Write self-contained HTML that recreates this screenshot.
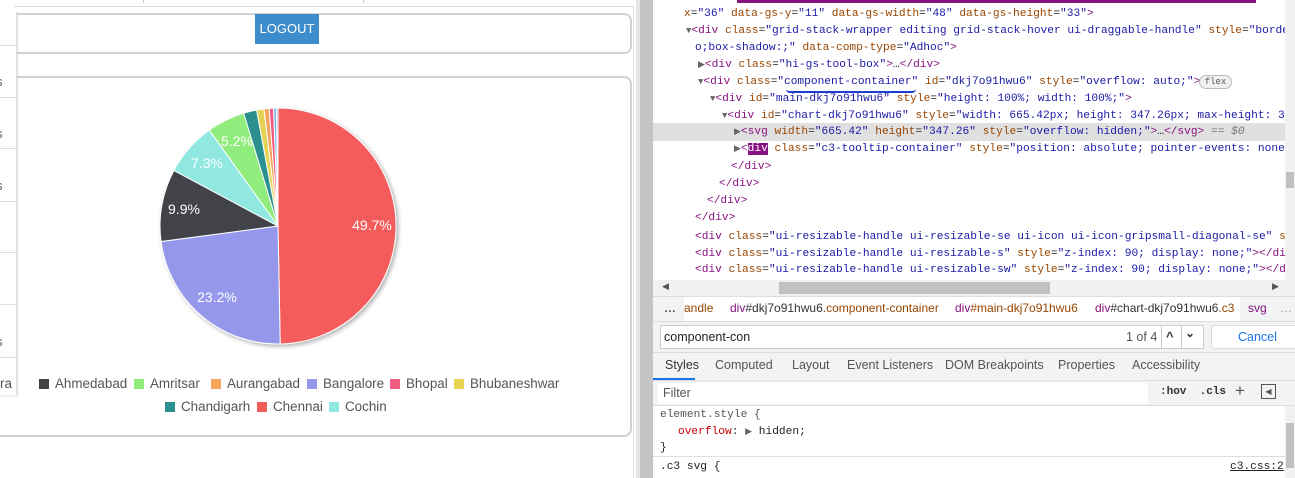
<!DOCTYPE html>
<html><head><meta charset="utf-8"><style>
*{margin:0;padding:0;box-sizing:border-box}
body{width:1295px;height:478px;overflow:hidden;background:#fff;font-family:"Liberation Sans",sans-serif;position:relative}
.abs{position:absolute}
.mono{font-family:"Liberation Mono",monospace;font-size:11.2px;white-space:pre;color:#222;line-height:17px}
.t{color:#881280}.a{color:#994500}.v{color:#1a1aa6}.p{color:#881280}
.ar{color:#666;font-size:9px}
.leg{position:absolute;font-size:13.4px;color:#555;white-space:nowrap}
.sq{position:absolute;width:10px;height:10px}
.bc{position:absolute;top:301px;font-size:12px;white-space:nowrap}
.tab{position:absolute;top:358px;font-size:12.5px;color:#555;white-space:nowrap}
</style></head><body>
<div class="abs" style="left:143px;top:0;width:1px;height:3px;background:#ccc"></div>
<div class="abs" style="left:363px;top:0;width:1px;height:3px;background:#ccc"></div>
<div class="abs" style="left:14px;top:6px;width:620px;height:472px;border-top:1px solid #ddd;border-right:1px solid #ddd"></div>
<div class="abs" style="left:-12px;top:13px;width:644px;height:41px;border:2px solid #d2d2d2;border-radius:8px"></div>
<div class="abs" style="left:255px;top:14px;width:64px;height:30px;background:#3d8ccb;color:#fff;font-size:13px;line-height:30px;text-align:center">LOGOUT</div>
<div class="abs" style="left:-12px;top:76px;width:644px;height:361px;border:2px solid #d2d2d2;border-radius:8px"></div>
<div class="abs" style="left:0;top:12px;width:17px;height:383px;background:#fff;border-right:1px solid #ddd;box-shadow:1px 1px 2px rgba(0,0,0,.12)"></div>
<div class="abs" style="left:0;top:45px;width:16px;height:1px;background:#ddd"></div>
<div class="abs" style="left:0;top:97px;width:16px;height:1px;background:#ddd"></div>
<div class="abs" style="left:0;top:148px;width:16px;height:1px;background:#ddd"></div>
<div class="abs" style="left:0;top:201px;width:16px;height:1px;background:#ddd"></div>
<div class="abs" style="left:0;top:252px;width:16px;height:1px;background:#ddd"></div>
<div class="abs" style="left:0;top:304px;width:16px;height:1px;background:#ddd"></div>
<div class="abs" style="left:0;top:357px;width:16px;height:1px;background:#ddd"></div>
<div class="abs" style="left:-4px;top:74px;font-size:13px;color:#555">s</div>
<div class="abs" style="left:-4px;top:126px;font-size:13px;color:#555">s</div>
<div class="abs" style="left:-4px;top:178px;font-size:13px;color:#555">s</div>
<div class="abs" style="left:-4px;top:334px;font-size:13px;color:#555">s</div>
<svg class="abs" style="left:0;top:0" width="636" height="478">
<defs><filter id="sh" x="-10%" y="-10%" width="130%" height="130%"><feDropShadow dx="2" dy="2" stdDeviation="2" flood-color="#000" flood-opacity="0.3"/></filter></defs>
<g id="sl" filter="url(#sh)"></g>
<g fill="#fff" font-size="14" font-family="Liberation Sans,sans-serif" text-anchor="middle">
<text x="372" y="230">49.7%</text><text x="217" y="302">23.2%</text><text x="184" y="214">9.9%</text><text x="207" y="168">7.3%</text><text x="237" y="146">5.2%</text></g>
</svg>
<script>
(function(){var d=[[49.7,'#f45b5b'],[23.2,'#9497ea'],[9.9,'#434348'],[7.3,'#91e8e1'],[5.2,'#90ed7d'],[1.8,'#2b908f'],[1.0,'#e4d354'],[0.7,'#f7a35c'],[0.6,'#f15c80'],[0.4,'#7cb5ec'],[0.2,'#8085e9']];
var cx=278,cy=226,r=118,a=0,s='',tot=0;d.forEach(function(x){tot+=x[0]});
d.forEach(function(x){var b=a+x[0]/tot*2*Math.PI;var x1=cx+r*Math.sin(a),y1=cy-r*Math.cos(a),x2=cx+r*Math.sin(b),y2=cy-r*Math.cos(b);
s+='<path d="M'+cx+','+cy+'L'+x1+','+y1+'A'+r+','+r+' 0 '+(b-a>Math.PI?1:0)+' 1 '+x2+','+y2+'Z" fill="'+x[1]+'" stroke="#fff" stroke-width="1"/>';a=b;});
document.getElementById('sl').innerHTML=s;})();
</script>
<div class="leg" style="left:0;top:376px">ra</div>
<div class="sq" style="left:39px;top:379px;background:#434348"></div><div class="leg" style="left:55px;top:376px">Ahmedabad</div>
<div class="sq" style="left:134px;top:379px;background:#90ed7d"></div><div class="leg" style="left:150px;top:376px">Amritsar</div>
<div class="sq" style="left:211px;top:379px;background:#f7a35c"></div><div class="leg" style="left:227px;top:376px">Aurangabad</div>
<div class="sq" style="left:307px;top:379px;background:#9497ea"></div><div class="leg" style="left:323px;top:376px">Bangalore</div>
<div class="sq" style="left:390px;top:379px;background:#f15c80"></div><div class="leg" style="left:406px;top:376px">Bhopal</div>
<div class="sq" style="left:454px;top:379px;background:#e4d354"></div><div class="leg" style="left:470px;top:376px">Bhubaneshwar</div>
<div class="sq" style="left:165px;top:402px;background:#2b908f"></div><div class="leg" style="left:181px;top:399px">Chandigarh</div>
<div class="sq" style="left:257px;top:402px;background:#f45b5b"></div><div class="leg" style="left:273px;top:399px">Chennai</div>
<div class="sq" style="left:329px;top:402px;background:#91e8e1"></div><div class="leg" style="left:345px;top:399px">Cochin</div>
<div class="abs" style="left:636px;top:0;width:4px;height:478px;background:#e6e6e6"></div>
<div class="abs" style="left:640px;top:0;width:13px;height:478px;background:#c4c4c4"></div>
<div class="abs" style="left:653px;top:0;width:642px;height:478px;background:#fff;overflow:hidden">
<div class="abs" style="left:84px;top:0;width:519px;height:3px;background:#881280"></div>
<div class="abs" style="left:0;top:123px;width:632px;height:18px;background:#e0e0e0"></div>
<div class="mono abs" style="left:31px;top:6px"><span class="a">x</span>=<span class="v">"36"</span> <span class="a">data-gs-y</span>=<span class="v">"11"</span> <span class="a">data-gs-width</span>=<span class="v">"48"</span> <span class="a">data-gs-height</span>=<span class="v">"33"</span><span class="p">&gt;</span></div>
<div class="mono abs" style="left:33px;top:23px"><span class="ar">▼</span><span class="t">&lt;div</span> <span class="a">class</span>=<span class="v">"grid-stack-wrapper editing grid-stack-hover ui-draggable-handle"</span> <span class="a">style</span>=<span class="v">"border</span></div>
<div class="mono abs" style="left:42px;top:40px"><span class="v">o;box-shadow:;"</span> <span class="a">data-comp-type</span>=<span class="v">"Adhoc"</span><span class="t">&gt;</span></div>
<div class="mono abs" style="left:45px;top:57px"><span class="ar">▶</span><span class="t">&lt;div</span> <span class="a">class</span>=<span class="v">"hi-gs-tool-box"</span><span class="t">&gt;</span>…<span class="t">&lt;/div&gt;</span></div>
<div class="mono abs" style="left:45px;top:74px"><span class="ar">▼</span><span class="t">&lt;div</span> <span class="a">class</span>=<span class="v">"component-container"</span> <span class="a">id</span>=<span class="v">"dkj7o91hwu6"</span> <span class="a">style</span>=<span class="v">"overflow: auto;"</span><span class="t">&gt;</span></div>
<div class="abs" style="left:133px;top:89px;width:130px;height:4px;border-bottom:2px solid #1b3fd0;border-radius:0 0 60px 60px"></div>
<div class="abs" style="left:546px;top:75px;width:33px;height:14px;border:1px solid #bbb;border-radius:7px;background:#f1f1f1;font-family:'Liberation Mono',monospace;font-size:9px;color:#555;text-align:center;line-height:12px">flex</div>
<div class="mono abs" style="left:57px;top:91px"><span class="ar">▼</span><span class="t">&lt;div</span> <span class="a">id</span>=<span class="v">"main-dkj7o91hwu6"</span> <span class="a">style</span>=<span class="v">"height: 100%; width: 100%;"</span><span class="t">&gt;</span></div>
<div class="mono abs" style="left:69px;top:108px"><span class="ar">▼</span><span class="t">&lt;div</span> <span class="a">id</span>=<span class="v">"chart-dkj7o91hwu6"</span> <span class="a">style</span>=<span class="v">"width: 665.42px; height: 347.26px; max-height: 34</span></div>
<div class="mono abs" style="left:81px;top:124px"><span class="ar">▶</span><span class="t">&lt;svg</span> <span class="a">width</span>=<span class="v">"665.42"</span> <span class="a">height</span>=<span class="v">"347.26"</span> <span class="a">style</span>=<span class="v">"overflow: hidden;"</span><span class="t">&gt;</span>…<span class="t">&lt;/svg&gt;</span> <span style="color:#777">== <i>$0</i></span></div>
<div class="mono abs" style="left:81px;top:141px"><span class="ar">▶</span><span class="t">&lt;</span><span style="background:#881280;color:#fff">div</span> <span class="a">class</span>=<span class="v">"c3-tooltip-container"</span> <span class="a">style</span>=<span class="v">"position: absolute; pointer-events: none;</span></div>
<div class="mono abs" style="left:78px;top:159px"><span class="t">&lt;/div&gt;</span></div>
<div class="mono abs" style="left:66px;top:176px"><span class="t">&lt;/div&gt;</span></div>
<div class="mono abs" style="left:54px;top:193px"><span class="t">&lt;/div&gt;</span></div>
<div class="mono abs" style="left:42px;top:210px"><span class="t">&lt;/div&gt;</span></div>
<div class="mono abs" style="left:42px;top:229px"><span class="t">&lt;div</span> <span class="a">class</span>=<span class="v">"ui-resizable-handle ui-resizable-se ui-icon ui-icon-gripsmall-diagonal-se"</span> <span class="a">sty</span></div>
<div class="mono abs" style="left:42px;top:246px"><span class="t">&lt;div</span> <span class="a">class</span>=<span class="v">"ui-resizable-handle ui-resizable-s"</span> <span class="a">style</span>=<span class="v">"z-index: 90; display: none;"</span><span class="t">&gt;&lt;/div&gt;</span></div>
<div class="mono abs" style="left:42px;top:262px"><span class="t">&lt;div</span> <span class="a">class</span>=<span class="v">"ui-resizable-handle ui-resizable-sw"</span> <span class="a">style</span>=<span class="v">"z-index: 90; display: none;"</span><span class="t">&gt;&lt;/div&gt;</span></div>
<div class="abs" style="left:632px;top:0;width:10px;height:280px;background:#f1f1f1"></div>
<div class="abs" style="left:633px;top:172px;width:8px;height:16px;background:#c1c1c1"></div>
</div>
<div class="abs" style="left:653px;top:280px;width:642px;height:16px;background:#f1f1f1"></div>
<div class="abs" style="left:779px;top:282px;width:271px;height:12px;background:#c1c1c1"></div>
<div class="abs" style="left:662px;top:281px;font-size:9px;color:#555">◀</div>
<div class="abs" style="left:1272px;top:281px;font-size:9px;color:#555">▶</div>
<div class="abs" style="left:653px;top:296px;width:642px;height:26px;background:#f1f3f4;border-top:1px solid #ddd;border-bottom:1px solid #ddd"></div>
<div class="abs" style="left:684px;top:297px;width:556px;height:24px;background:#fff"></div>
<div class="bc" style="left:664px;color:#555;font-weight:bold">…</div>
<div class="bc" style="left:684px;color:#994500">andle</div>
<div class="bc" style="left:730px"><span style="color:#881280">div</span><span style="color:#333">#dkj7o91hwu6</span><span style="color:#994500">.component-container</span></div>
<div class="bc" style="left:955px"><span style="color:#881280">div</span><span style="color:#994500">#main-dkj7o91hwu6</span></div>
<div class="bc" style="left:1095px"><span style="color:#881280">div</span><span style="color:#333">#chart-dkj7o91hwu6</span><span style="color:#994500">.c3</span></div>
<div class="bc" style="left:1248px;color:#881280">svg</div>
<div class="bc" style="left:1280px;color:#999">…</div>
<div class="abs" style="left:653px;top:322px;width:642px;height:30px;background:#f1f3f4"></div>
<div class="abs" style="left:660px;top:325px;width:544px;height:24px;background:#fff;border:1px solid #ccc"></div>
<div class="abs" style="left:664px;top:330px;font-size:12.5px;color:#222">component-con</div>
<div class="abs" style="left:1126px;top:330px;font-size:12.5px;color:#555">1 of 4</div>
<div class="abs" style="left:1161px;top:325px;width:1px;height:24px;background:#ccc"></div>
<div class="abs" style="left:1181px;top:325px;width:1px;height:24px;background:#ccc"></div>
<div class="abs" style="left:1166px;top:329px;font-size:13px;font-weight:bold;color:#333">^</div>
<div class="abs" style="left:1185px;top:326px;font-size:12px;font-weight:bold;color:#333">⌄</div>
<div class="abs" style="left:1211px;top:325px;width:90px;height:24px;background:#fff;border:1px solid #ddd;border-radius:4px;font-size:12.5px;color:#1a73e8;line-height:22px;padding-left:26px">Cancel</div>
<div class="abs" style="left:653px;top:352px;width:642px;height:29px;background:#f1f3f4;border-top:1px solid #ddd;border-bottom:1px solid #ddd"></div>
<div class="abs" style="left:653px;top:378px;width:42px;height:2px;background:#1a73e8"></div>
<div class="tab" style="left:665px;color:#333">Styles</div>
<div class="tab" style="left:715px">Computed</div>
<div class="tab" style="left:792px">Layout</div>
<div class="tab" style="left:847px">Event Listeners</div>
<div class="tab" style="left:945px">DOM Breakpoints</div>
<div class="tab" style="left:1058px">Properties</div>
<div class="tab" style="left:1132px">Accessibility</div>
<div class="abs" style="left:653px;top:381px;width:642px;height:25px;background:#f1f3f4;border-bottom:1px solid #ddd"></div>
<div class="abs" style="left:658px;top:383px;width:490px;height:21px;background:#fff"></div>
<div class="abs" style="left:663px;top:386px;font-size:12.5px;color:#555">Filter</div>
<div class="mono abs" style="left:1160px;top:384px;color:#333;font-weight:bold;font-size:11px">:hov  .cls</div>
<div class="abs" style="left:1235px;top:381px;font-size:17px;color:#555">+</div>
<div class="abs" style="left:1261px;top:384px;width:15px;height:15px;border:1px solid #555;font-size:8px;line-height:13px;text-align:center;color:#555">◀</div>
<div class="abs" style="left:1285px;top:406px;width:10px;height:72px;background:#f1f1f1"></div>
<div class="abs" style="left:1286px;top:423px;width:8px;height:45px;background:#c1c1c1"></div>
<div class="mono abs" style="left:660px;top:407px;color:#555">element.style {</div>
<div class="mono abs" style="left:678px;top:424px"><span style="color:#c80000">overflow</span>: <span class="ar">▶</span> hidden;</div>
<div class="mono abs" style="left:660px;top:440px">}</div>
<div class="abs" style="left:653px;top:456px;width:632px;height:1px;background:#ddd"></div>
<div class="mono abs" style="left:660px;top:459px">.c3 svg {</div>
<div class="mono abs" style="left:1230px;top:459px;text-decoration:underline">c3.css:2</div>
</body></html>
